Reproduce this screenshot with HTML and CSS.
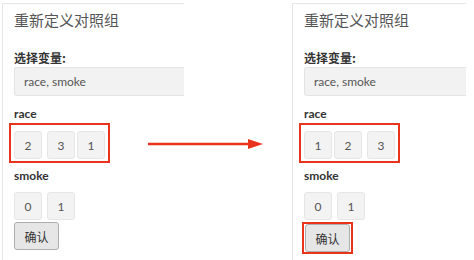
FILE: index.html
```html
<!DOCTYPE html>
<html>
<head>
<meta charset="utf-8">
<link rel="stylesheet" href="styles.css">
</head>
<body>
<div class="stage">
  <div class="panel panel-left">
    <div class="title">重新定义对照组</div>
    <div class="label label-vars">选择变量:</div>
    <div class="select">race, smoke</div>
    <div class="label label-race">race</div>
    <div class="sortable">
      <span class="chip gap-r5">2</span><span class="chip gap-r2">3</span><span class="chip">1</span>
    </div>
    <div class="label label-smoke">smoke</div>
    <div class="chips">
      <span class="chip gap-r5">0</span><span class="chip">1</span>
    </div>
    <button class="confirm">确认</button>
  </div>
  <div class="panel panel-right">
    <div class="title">重新定义对照组</div>
    <div class="label label-vars">选择变量:</div>
    <div class="select">race, smoke</div>
    <div class="label label-race">race</div>
    <div class="sortable">
      <span class="chip gap-r2">1</span><span class="chip gap-r5">2</span><span class="chip">3</span>
    </div>
    <div class="label label-smoke">smoke</div>
    <div class="chips">
      <span class="chip gap-r5">0</span><span class="chip">1</span>
    </div>
    <div class="mark">
      <button class="confirm confirm-in-mark">确认</button>
    </div>
  </div>
  <svg class="arrow" width="120" height="14" viewBox="0 0 120 14">
    <line x1="0" y1="7" x2="104" y2="7" stroke="#e8341c" stroke-width="2.4"/>
    <polygon points="100,2 115,7 100,12" fill="#e8341c"/>
  </svg>
</div>
</body>
</html>
```
FILE: styles.css
```css
html, body {
  margin: 0;
  padding: 0;
  background: #ffffff;
}
body {
  font-family: Lato, "Noto Sans CJK SC", sans-serif;
  color: #333;
  width: 474px;
  height: 260px;
  overflow: hidden;
}
.stage {
  position: relative;
  display: flex;
  padding-top: 3px;
  height: 257px;
}
.panel {
  display: flex;
  flex-direction: column;
  align-items: flex-start;
  border-left: 1px solid #e6e6e6;
  border-top: 1px solid #e6e6e6;
  padding-left: 11px;
  box-sizing: border-box;
  overflow: hidden;
}
.panel-left {
  margin-left: 2px;
  width: 182px;
}
.panel-right {
  margin-left: 108px;
  width: 174px;
}
.title {
  font-family: "Noto Sans CJK SC", sans-serif;
  font-size: 15px;
  line-height: 20px;
  color: #555;
  margin-top: 6px;
  white-space: nowrap;
}
.label {
  font-weight: bold;
  font-size: 12px;
  line-height: 16px;
  color: #333;
  white-space: nowrap;
}
.label-vars {
  margin-top: 20px;
  font-family: "Noto Sans CJK SC", sans-serif;
}
.select {
  margin-top: 1px;
  width: 100%;
  height: 29px;
  box-sizing: border-box;
  background: #f2f2f2;
  border: 1px solid #e4e4e4;
  border-right: none;
  border-radius: 3px 0 0 3px;
  padding-left: 9px;
  font-size: 12px;
  line-height: 27px;
  color: #555;
  white-space: nowrap;
}
.label-race {
  margin-top: 10px;
}
.sortable {
  display: flex;
  margin: 1px 0 0 -5px;
  padding: 6px 3px 2px 3px;
  border: 2px solid #e8341c;
}
.label-smoke {
  margin-top: 5px;
}
.chips {
  display: flex;
  margin-top: 8px;
}
.chip {
  display: flex;
  align-items: center;
  justify-content: center;
  width: 28px;
  height: 28px;
  box-sizing: border-box;
  background: #f3f3f3;
  border: 1px solid #e6e6e6;
  border-radius: 3px;
  font-size: 12px;
  color: #555;
}
.gap-r5 {
  margin-right: 5px;
}
.gap-r2 {
  margin-right: 2px;
}
.confirm {
  margin-top: 2px;
  width: 45px;
  height: 28px;
  box-sizing: border-box;
  background: #e6e6e6;
  border: 1px solid #adadad;
  border-radius: 3px;
  font-family: "Noto Sans CJK SC", sans-serif;
  font-size: 12px;
  color: #333;
  padding: 0;
}
.mark {
  display: flex;
  margin: 2px 0 0 -2px;
  padding: 0 1px;
  border: 2px solid #e8341c;
}
.confirm-in-mark {
  margin-top: 0;
}
.arrow {
  position: absolute;
  left: 148px;
  top: 137px;
}
```
